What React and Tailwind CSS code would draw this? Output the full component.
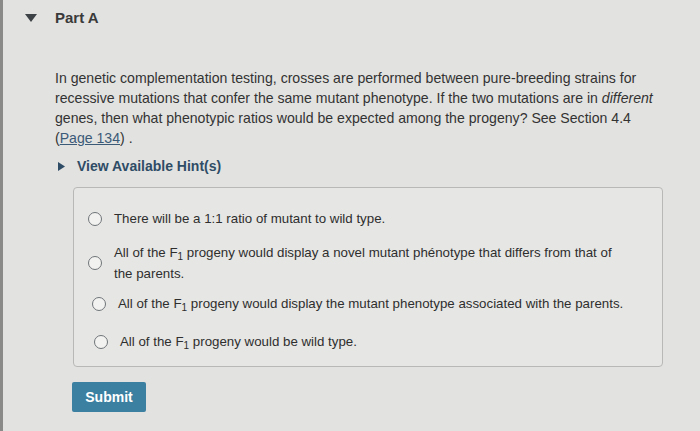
const Radio = () => (
  <span className="w-[14px] h-[14px] rounded-full border border-[#6f7478] bg-[#f2f2f0] shrink-0" />
)

const F1 = () => (
  <span>
    F<sub className="text-[10px]">1</sub>
  </span>
)

export default function App() {
  return (
    <div
      className="w-[700px] h-[431px] bg-[#e2e2e0] border-l-[3px] border-[#8a8a88] text-[#2e2e2e] overflow-hidden"
      style={{ fontFamily: '"Liberation Sans", Arial, sans-serif' }}
    >
      <div className="flex items-center h-[36px] pl-[22px]">
        <svg width="12" height="8" viewBox="0 0 12 8" className="mr-[18px]">
          <path d="M0 0 L12 0 L6 8 Z" fill="#3d4247" />
        </svg>
        <span className="text-[15px] font-bold text-[#3a3a3a]">Part A</span>
      </div>

      <div className="pl-[52px] pr-[30px] pt-[32px]">
        <p className="text-[14.1px] leading-[20px] text-[#333]">
          In genetic complementation testing, crosses are performed between pure-breeding strains for
          <br />
          recessive mutations that confer the same mutant phenotype. If the two mutations are in <i className="pr-[1px]">different</i>
          <br />
          genes, then what phenotypic ratios would be expected among the progeny? See Section 4.4
          <br />
          (<span className="underline text-[#3b5a78]">Page 134</span>) .
        </p>

        <div className="flex items-center mt-[8px] ml-[3px]">
          <svg width="7" height="9" viewBox="0 0 7 9" className="mr-[12px]">
            <path d="M0 0 L7 4.5 L0 9 Z" fill="#2f4c66" />
          </svg>
          <span className="text-[14px] font-bold text-[#2f4c66]">View Available Hint(s)</span>
        </div>

        <div className="mt-[10px] ml-[18px] w-[590px] h-[180px] border border-[#b8b8b6] rounded-[4px] bg-[#e6e6e4] pl-[14px] pt-[21px]">
          <div className="flex items-center gap-[12px] text-[13.3px] leading-[20px]">
            <Radio />
            <span>There will be a 1:1 ratio of mutant to wild type.</span>
          </div>
          <div className="flex items-center gap-[12px] text-[13.3px] leading-[21px] mt-[13px]">
            <Radio />
            <span>
              All of the <F1 /> progeny would display a novel mutant phénotype that differs from that of
              <br />
              the parents.
            </span>
          </div>
          <div className="flex items-center gap-[12px] text-[13.3px] leading-[20px] mt-[10px] ml-[4px]">
            <Radio />
            <span>
              All of the <F1 /> progeny would display the mutant phenotype associated with the parents.
            </span>
          </div>
          <div className="flex items-center gap-[12px] text-[13.3px] leading-[20px] mt-[18px] ml-[6px]">
            <Radio />
            <span>
              All of the <F1 /> progeny would be wild type.
            </span>
          </div>
        </div>

        <button className="mt-[15px] ml-[17px] w-[74px] h-[30px] bg-[#3b7fa1] rounded-[2px] text-white text-[14px] font-bold">
          Submit
        </button>
      </div>
    </div>
  )
}
